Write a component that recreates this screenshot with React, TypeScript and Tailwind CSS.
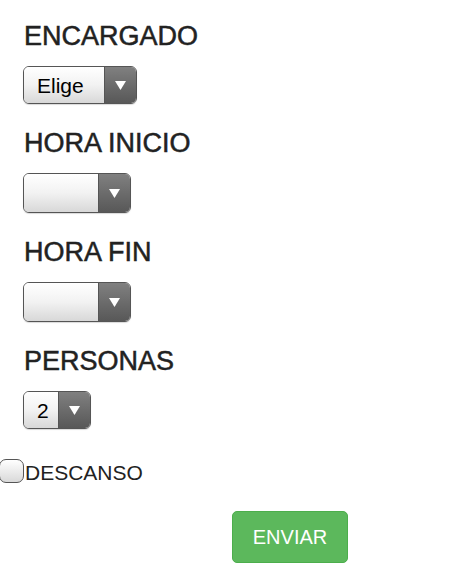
import React from 'react';

const font = { fontFamily: '"Liberation Sans", Arial, Helvetica, sans-serif' };

interface FakeSelectProps {
  value?: string;
  width: string;
  height: string;
}

const FakeSelect: React.FC<FakeSelectProps> = ({ value, width, height }) => (
  <div className={`flex ${width} ${height} rounded-[6px] border border-[#555] overflow-hidden shadow-[0_1px_1px_rgba(0,0,0,0.15)]`}>
    <div className="flex-1 flex items-center pl-[13px] bg-gradient-to-b from-[#ffffff] via-[#f2f2f2] to-[#d8d8d8] text-[21px] text-black leading-none">
      {value}
    </div>
    <div className="w-[32px] flex items-center justify-center border-l border-[#555] bg-gradient-to-b from-[#808080] to-[#585858]">
      <svg width="11" height="9" viewBox="0 0 11 9">
        <polygon points="0,0 11,0 5.5,9" fill="#fff" />
      </svg>
    </div>
  </div>
);

const Label: React.FC<{ children: React.ReactNode; className?: string }> = ({ children, className }) => (
  <div className={`text-[27px] leading-[27px] text-[#222] [-webkit-text-stroke:0.5px_#222] ${className ?? ''}`}>{children}</div>
);

export default function App() {
  return (
    <div style={font} className="w-[474px] h-[572px] bg-white overflow-hidden">
      <div className="pl-[23px] pt-[23px]">
        <Label className="pl-[1px]">ENCARGADO</Label>
        <div className="mt-[16px]">
          <FakeSelect value="Elige" width="w-[114px]" height="h-[38px]" />
        </div>

        <Label className="pl-[1px] mt-[26px]">HORA INICIO</Label>
        <div className="mt-[16px]">
          <FakeSelect width="w-[108px]" height="h-[40px]" />
        </div>

        <Label className="pl-[1px] mt-[26px]">HORA FIN</Label>
        <div className="mt-[16px]">
          <FakeSelect width="w-[108px]" height="h-[40px]" />
        </div>

        <Label className="pl-[1px] mt-[26px]">PERSONAS</Label>
        <div className="mt-[16px]">
          <FakeSelect value="2" width="w-[68px]" height="h-[38px]" />
        </div>
      </div>

      <div className="flex items-center mt-[30px]">
        <div className="w-[25px] h-[24px] -ml-[1px] rounded-[7px] border border-[#555] bg-gradient-to-b from-[#ffffff] to-[#d9d9d9]" />
        <span className="text-[21px] leading-none text-[#222] pl-[1px] pt-[3px]">DESCANSO</span>
      </div>

      <div className="pl-[232px] mt-[28px]">
        <button className="w-[116px] h-[52px] rounded-[5px] bg-[#5cb85c] text-white text-[20px] leading-none border border-[#4cae4c]" style={font}>
          ENVIAR
        </button>
      </div>
    </div>
  );
}
